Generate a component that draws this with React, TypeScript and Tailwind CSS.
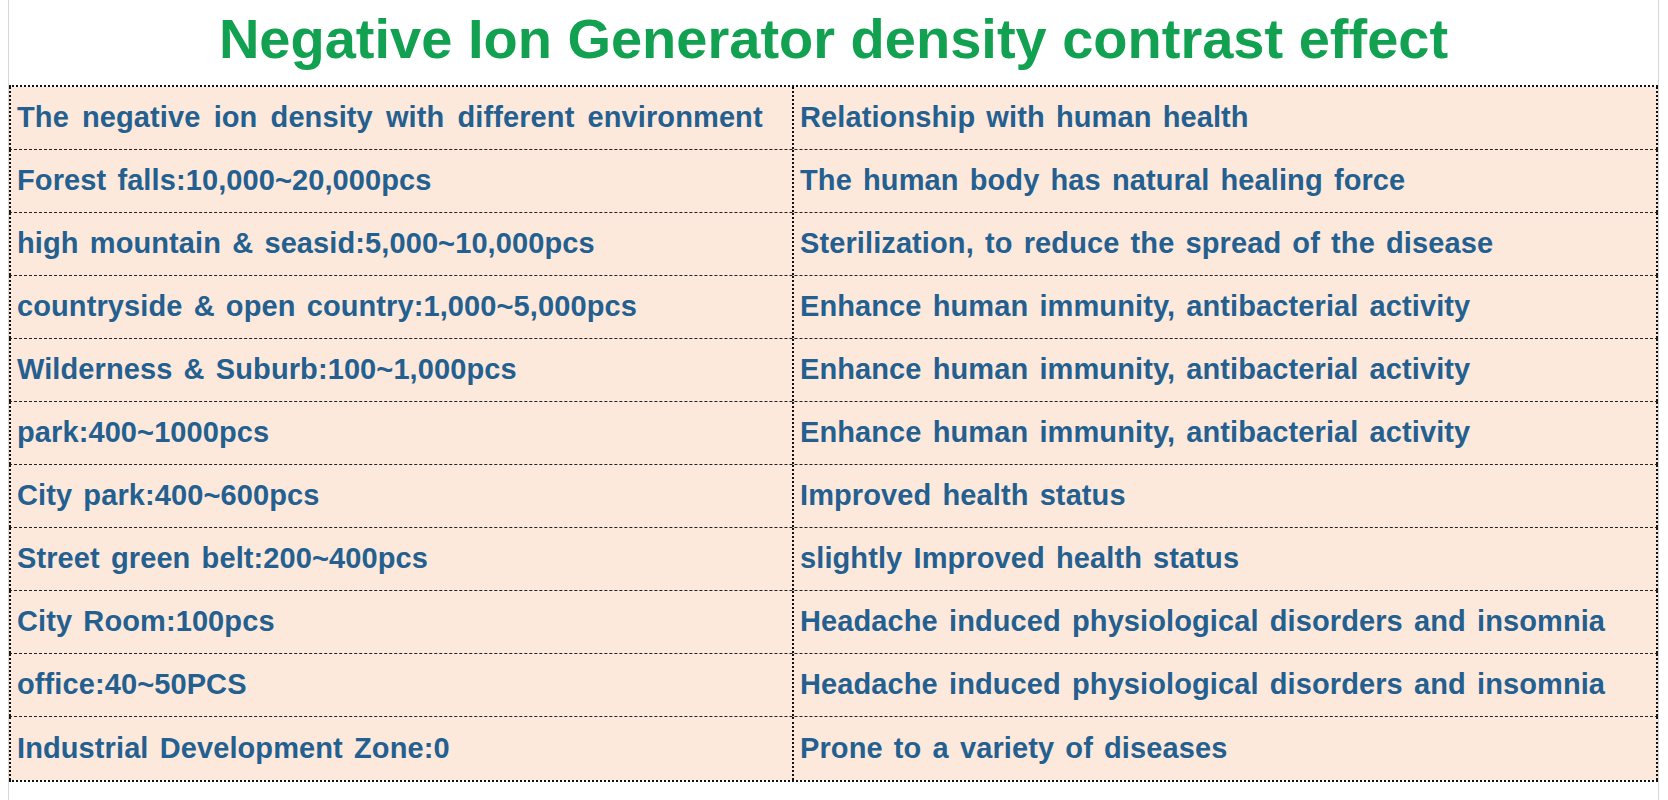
const rows: [string, string][] = [
  ["The negative ion density with different environment", "Relationship with human health"],
  ["Forest falls:10,000~20,000pcs", "The human body has natural healing force"],
  ["high mountain & seasid:5,000~10,000pcs", "Sterilization, to reduce the spread of the disease"],
  ["countryside & open country:1,000~5,000pcs", "Enhance human immunity, antibacterial activity"],
  ["Wilderness & Suburb:100~1,000pcs", "Enhance human immunity, antibacterial activity"],
  ["park:400~1000pcs", "Enhance human immunity, antibacterial activity"],
  ["City park:400~600pcs", "Improved health status"],
  ["Street green belt:200~400pcs", "slightly Improved health status"],
  ["City Room:100pcs", "Headache induced physiological disorders and insomnia"],
  ["office:40~50PCS", "Headache induced physiological disorders and insomnia"],
  ["Industrial Development Zone:0", "Prone to a variety of diseases"],
];

export default function App() {
  return (
    <div className="h-[800px] w-[1668px] overflow-hidden bg-white font-['Liberation_Sans',Arial,sans-serif]">
      <div className="ml-[8px] h-full w-[1651px] border-x border-[#d8d8d8]">
        <h1 className="pt-[7px] text-center text-[56px] font-bold leading-[64px] text-[#12a150]">
          Negative Ion Generator density contrast effect
        </h1>
        <div className="mt-[14px] grid h-[697px] grid-rows-[repeat(11,1fr)] border-y-2 border-dotted border-[#111]">
          {rows.map(([left, right], i) => (
            <div
              key={i}
              className={
                i < rows.length - 1
                  ? "grid grid-cols-[783px_1fr] border-b border-dashed border-[#222] bg-[#fde9dc]"
                  : "grid grid-cols-[783px_1fr] bg-[#fde9dc]"
              }
            >
              <div
                className={
                  i === 0
                    ? "flex items-center border-l-2 border-dotted border-[#111] pl-[6px] text-[29px] font-bold tracking-[0.1px] [word-spacing:5px] text-[#24608f] whitespace-nowrap"
                    : "flex items-center border-l-2 border-dotted border-[#111] pl-[6px] text-[29px] font-bold tracking-[0.1px] [word-spacing:3px] text-[#24608f] whitespace-nowrap"
                }
              >
                {left}
              </div>
              <div className="flex items-center border-x-2 border-dotted border-[#111] pl-[6px] text-[29px] font-bold tracking-[0.1px] [word-spacing:3px] text-[#24608f] whitespace-nowrap">
                {right}
              </div>
            </div>
          ))}
        </div>
      </div>
    </div>
  );
}
